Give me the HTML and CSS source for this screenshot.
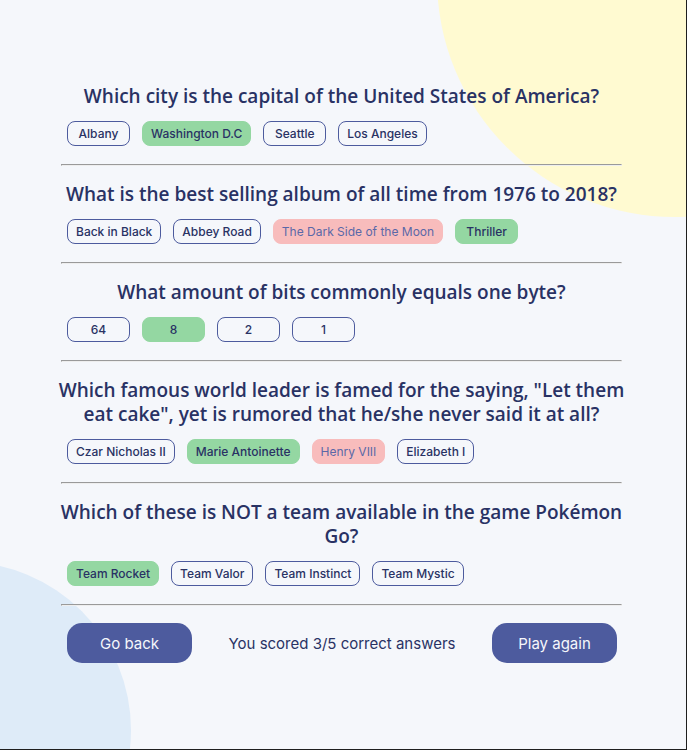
FILE: index.html
```html
<!DOCTYPE html>
<html lang="en">
<head>
    <meta charset="UTF-8">
    <title>Quizzical</title>
    <link rel="stylesheet" href="styles.css">
</head>
<body>
    <div class="page">
        <div class="blob blob-yellow"></div>
        <div class="blob blob-blue"></div>

        <main class="quiz">
            <section class="question">
                <h2>Which city is the capital of the United States of America?</h2>
                <div class="answers">
                    <span class="answer">Albany</span>
                    <span class="answer correct">Washington D.C</span>
                    <span class="answer">Seattle</span>
                    <span class="answer">Los Angeles</span>
                </div>
                <hr>
            </section>

            <section class="question">
                <h2>What is the best selling album of all time from 1976 to 2018?</h2>
                <div class="answers">
                    <span class="answer">Back in Black</span>
                    <span class="answer">Abbey Road</span>
                    <span class="answer wrong">The Dark Side of the Moon</span>
                    <span class="answer correct">Thriller</span>
                </div>
                <hr>
            </section>

            <section class="question">
                <h2>What amount of bits commonly equals one byte?</h2>
                <div class="answers">
                    <span class="answer">64</span>
                    <span class="answer correct">8</span>
                    <span class="answer">2</span>
                    <span class="answer">1</span>
                </div>
                <hr>
            </section>

            <section class="question">
                <h2>Which famous world leader is famed for the saying, "Let them eat cake", yet is rumored that he/she never said it at all?</h2>
                <div class="answers">
                    <span class="answer">Czar Nicholas II</span>
                    <span class="answer correct">Marie Antoinette</span>
                    <span class="answer wrong">Henry VIII</span>
                    <span class="answer">Elizabeth I</span>
                </div>
                <hr>
            </section>

            <section class="question">
                <h2>Which of these is NOT a team available in the game Pokémon Go?</h2>
                <div class="answers">
                    <span class="answer correct">Team Rocket</span>
                    <span class="answer">Team Valor</span>
                    <span class="answer">Team Instinct</span>
                    <span class="answer">Team Mystic</span>
                </div>
                <hr>
            </section>

            <div class="results">
                <button class="btn">Go back</button>
                <p class="score">You scored 3/5 correct answers</p>
                <button class="btn">Play again</button>
            </div>
        </main>
    </div>
</body>
</html>
```

FILE: styles.css
```css
html {
    background-color: #1e1e1e;
}

body {
    margin: 0;
    font-family: Inter, "Liberation Sans", sans-serif;
    color: #293264;
}

.page {
    position: relative;
    width: 686px;
    height: 749px;
    overflow: hidden;
    background-color: #F5F7FB;
}

.blob {
    position: absolute;
    border-radius: 50%;
    z-index: 0;
}

.blob-yellow {
    width: 476px;
    height: 476px;
    left: 437px;
    top: -259px;
    background-color: #FFFAD1;
}

.blob-blue {
    width: 336px;
    height: 336px;
    left: -205px;
    top: 562px;
    background-color: #DEEBF8;
}

.quiz {
    position: relative;
    z-index: 1;
    width: 561px;
    margin-left: 61px;
    padding-top: 84px;
}

.question h2 {
    margin: 0 -5px;
    font-family: "Open Sans", Lato, sans-serif;
    font-size: 19px;
    font-weight: 600;
    line-height: 24px;
    text-align: center;
    color: #293264;
}

.answers {
    display: flex;
    gap: 12px;
    margin-top: 13px;
    padding-left: 6px;
}

.answer {
    min-width: 63px;
    box-sizing: border-box;
    padding: 4px 8px;
    font-size: 12px;
    font-weight: 500;
    line-height: 15px;
    text-align: center;
    border: 1px solid #4D5B9E;
    border-radius: 8px;
}

.answer.correct {
    background-color: #94D7A2;
    border-color: #94D7A2;
}

.answer.wrong {
    background-color: #F8BCBC;
    border-color: #F8BCBC;
    color: #5A68A8;
    font-weight: 400;
}

hr {
    margin: 18px 0 16px;
}

.results {
    display: flex;
    align-items: center;
    justify-content: space-between;
    padding: 1px 5px 0 6px;
}

.btn {
    width: 125px;
    height: 40px;
    border: none;
    border-radius: 15px;
    background-color: #4D5B9E;
    color: #F5F7FB;
    font-family: Inter, sans-serif;
    font-size: 15px;
}

.score {
    margin: 0;
    font-size: 15px;
    font-weight: 400;
}
```
